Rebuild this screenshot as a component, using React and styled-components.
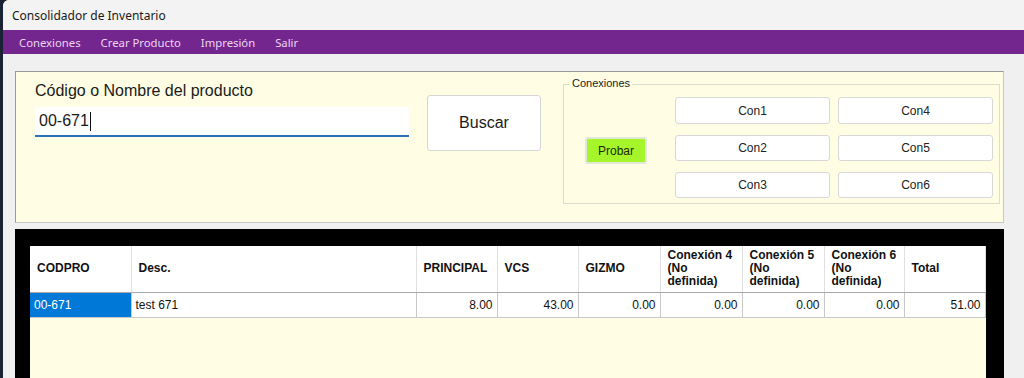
import React from 'react';
import styled, { createGlobalStyle } from 'styled-components';

const GlobalStyle = createGlobalStyle`
  html, body {
    margin: 0;
    padding: 0;
    background: #1b2233;
    overflow: hidden;
  }
  * {
    box-sizing: border-box;
  }
`;

//ventana completa
const Desktop = styled.div`
  width: 1024px;
  height: 378px;
  padding-left: 3px;
  background: #1b2233;
`;

const Window = styled.div`
  height: 100%;
  display: flex;
  flex-direction: column;
  background: #f0f0f0;
  border-top-left-radius: 6px;
  overflow: hidden;
`;

const TitleBar = styled.div`
  height: 30px;
  display: flex;
  align-items: center;
  padding-left: 9px;
  background: #f3f3f3;
  font-family: 'Noto Sans', 'Open Sans', sans-serif;
  font-size: 12px;
  color: #1a1a1a;
`;

//menu morado
const MenuBar = styled.div`
  height: 24px;
  display: flex;
  align-items: center;
  gap: 20px;
  margin-left: -3px;
  padding-left: 19px;
  background: #74268f;
`;

const MenuItem = styled.span`
  font-family: 'Noto Sans', 'Open Sans', sans-serif;
  font-size: 11.3px;
  color: #ecd6f4;
`;

const Body = styled.div`
  flex: 1;
  display: flex;
  flex-direction: column;
  gap: 6px;
  padding: 17px 20px 0 12px;
`;

//panel de busqueda
const SearchPanel = styled.div`
  height: 152px;
  display: flex;
  align-items: flex-start;
  background: #fffee4;
  border: 1px solid #9a9a9a;
  border-right-color: #c8c8c8;
  border-bottom-color: #c8c8c8;
`;

const SearchColumn = styled.div`
  display: flex;
  flex-direction: column;
  margin: 9px 0 0 19px;
  width: 374px;
`;

const Label = styled.label`
  font-family: 'Liberation Sans', Arial, sans-serif;
  font-size: 16px;
  line-height: 20px;
  color: #1a1a1a;
`;

const SearchInput = styled.div`
  margin-top: 6px;
  height: 30px;
  display: flex;
  align-items: center;
  padding-left: 4px;
  background: #fff;
  border-bottom: 2px solid #2a6fb8;
  font-family: 'Liberation Sans', Arial, sans-serif;
  font-size: 16px;
  color: #1a1a1a;
`;

const Caret = styled.span`
  display: inline-block;
  width: 1px;
  height: 19px;
  margin-left: 1px;
  background: #111;
`;

const BigButton = styled.div`
  width: 114px;
  height: 56px;
  margin: 23px 0 0 18px;
  display: flex;
  align-items: center;
  justify-content: center;
  background: #fff;
  border: 1px solid #d6d6d6;
  border-radius: 3px;
  font-family: 'Liberation Sans', Arial, sans-serif;
  font-size: 16px;
  color: #1a1a1a;
`;

//grupo de conexiones
const GroupBox = styled.div`
  position: relative;
  width: 437px;
  height: 120px;
  margin: 12px 3px 0 auto;
  display: flex;
  align-items: flex-start;
  padding: 12px 6px 0 21px;
  border: 1px solid #dcdcd0;
`;

const Legend = styled.span`
  position: absolute;
  top: -8px;
  left: 6px;
  padding: 0 2px;
  background: #fffee4;
  font-family: 'Liberation Sans', Arial, sans-serif;
  font-size: 11px;
  color: #222;
`;

const ProbarButton = styled.div`
  width: 62px;
  height: 27px;
  margin-top: 40px;
  display: flex;
  align-items: center;
  justify-content: center;
  background: #a6f52a;
  border: 2px solid #e2e8d8;
  border-radius: 3px;
  font-family: 'Liberation Sans', Arial, sans-serif;
  font-size: 12px;
  color: #1c2a10;
`;

const ConGrid = styled.div`
  margin-left: 28px;
  display: grid;
  grid-template-columns: 155px 155px;
  grid-template-rows: 27px 26px 26px;
  column-gap: 8px;
  row-gap: 11px;
`;

const ConButton = styled.div`
  display: flex;
  align-items: center;
  justify-content: center;
  background: #fff;
  border: 1px solid #d8d8d8;
  border-radius: 3px;
  font-family: 'Liberation Sans', Arial, sans-serif;
  font-size: 12px;
  color: #222;
`;

//tabla
const GridFrame = styled.div`
  flex: 1;
  background: #000;
  padding: 17px 19px 0 15px;
  display: flex;
`;

const GridArea = styled.div`
  flex: 1;
  background: #fffee4;
`;

const Table = styled.table`
  width: 955px;
  border-collapse: collapse;
  table-layout: fixed;
  font-family: 'Liberation Sans', Arial, sans-serif;
`;

const Th = styled.th`
  height: 46px;
  padding: 0 4px 0 7px;
  background: #fff;
  border-right: 1px solid #e0e0e0;
  border-bottom: 1px solid #a8a8a8;
  text-align: left;
  vertical-align: middle;
  font-size: 12px;
  line-height: 13px;
  font-weight: 700;
  color: #111;
  width: ${(p) => p.w}px;
`;

const Td = styled.td`
  height: 25px;
  padding: 0 4px;
  background: ${(p) => (p.selected ? '#0078d7' : '#fff')};
  color: ${(p) => (p.selected ? '#fff' : '#111')};
  border-right: 1px solid #c8c8c8;
  border-bottom: 1px solid #c8c8c8;
  text-align: ${(p) => (p.num ? 'right' : 'left')};
  font-size: 12px;
  white-space: nowrap;
`;

const columns = [
  { title: 'CODPRO', w: 101 },
  { title: 'Desc.', w: 285 },
  { title: 'PRINCIPAL', w: 81 },
  { title: 'VCS', w: 81 },
  { title: 'GIZMO', w: 82 },
  { title: 'Conexión 4 (No definida)', w: 82 },
  { title: 'Conexión 5 (No definida)', w: 82 },
  { title: 'Conexión 6 (No definida)', w: 80 },
  { title: 'Total', w: 81 },
];

const rows = [
  ['00-671', 'test 671', '8.00', '43.00', '0.00', '0.00', '0.00', '0.00', '51.00'],
];

function App() {
  return (
    <Desktop>
      <GlobalStyle />
      <Window>
        <TitleBar>Consolidador de Inventario</TitleBar>
        <MenuBar>
          <MenuItem>Conexiones</MenuItem>
          <MenuItem>Crear Producto</MenuItem>
          <MenuItem>Impresión</MenuItem>
          <MenuItem>Salir</MenuItem>
        </MenuBar>
        <Body>
          <SearchPanel>
            <SearchColumn>
              <Label>Código o Nombre del producto</Label>
              <SearchInput>
                00-671
                <Caret />
              </SearchInput>
            </SearchColumn>
            <BigButton>Buscar</BigButton>
            <GroupBox>
              <Legend>Conexiones</Legend>
              <ProbarButton>Probar</ProbarButton>
              <ConGrid>
                <ConButton>Con1</ConButton>
                <ConButton>Con4</ConButton>
                <ConButton>Con2</ConButton>
                <ConButton>Con5</ConButton>
                <ConButton>Con3</ConButton>
                <ConButton>Con6</ConButton>
              </ConGrid>
            </GroupBox>
          </SearchPanel>
          <GridFrame>
            <GridArea>
              <Table>
                <thead>
                  <tr>
                    {columns.map((c) => (
                      <Th key={c.title} w={c.w}>
                        {c.title}
                      </Th>
                    ))}
                  </tr>
                </thead>
                <tbody>
                  {rows.map((r) => (
                    <tr key={r[0]}>
                      {r.map((v, i) => (
                        <Td key={i} selected={i === 0} num={i > 1}>
                          {v}
                        </Td>
                      ))}
                    </tr>
                  ))}
                </tbody>
              </Table>
            </GridArea>
          </GridFrame>
        </Body>
      </Window>
    </Desktop>
  );
}

export default App;
